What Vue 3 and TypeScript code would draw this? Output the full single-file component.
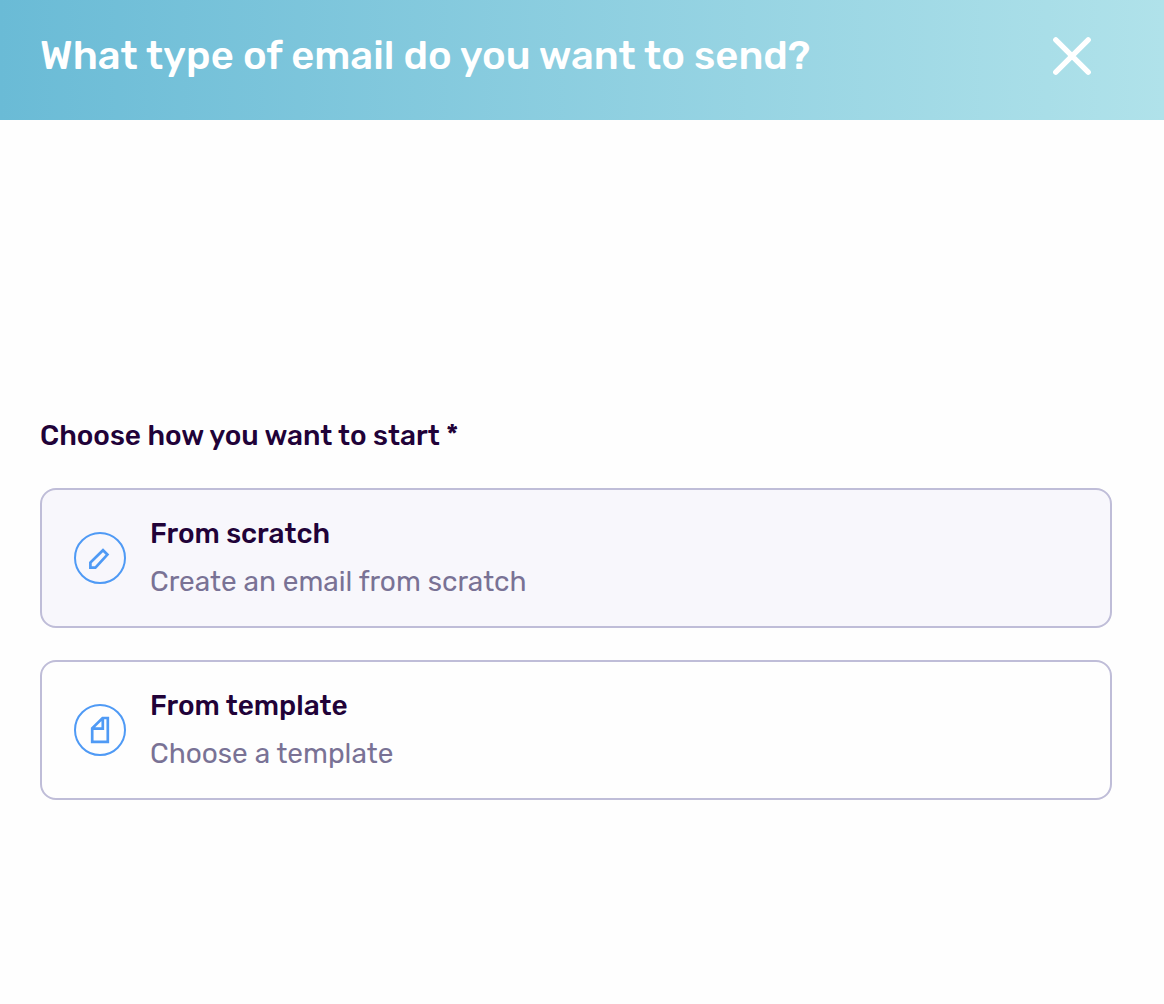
<script setup lang="ts">
import { ref } from 'vue'

type StartMode = 'scratch' | 'template'

interface StartOption {
  id: StartMode
  title: string
  description: string
}

const options: StartOption[] = [
  { id: 'scratch', title: 'From scratch', description: 'Create an email from scratch' },
  { id: 'template', title: 'From template', description: 'Choose a template' },
]

const selected = ref<StartMode>('scratch')
</script>

<template>
  <div class="dialog" role="dialog" aria-labelledby="dialog-title">
    <header class="header">
      <h1 id="dialog-title" class="title">What type of email do you want to send?</h1>
      <button class="close" type="button" aria-label="Close">
        <svg width="40" height="40" viewBox="0 0 40 40" fill="none" stroke="currentColor" stroke-width="5.4" stroke-linecap="round">
          <path d="M3.8 3.8L36.2 36.2M36.2 3.8L3.8 36.2" />
        </svg>
      </button>
    </header>

    <main class="body">
      <fieldset class="choices">
        <legend class="legend">Choose how you want to start *</legend>
        <div class="list">
          <label
            v-for="option in options"
            :key="option.id"
            class="card"
            :class="{ selected: selected === option.id }"
          >
            <input v-model="selected" class="radio" type="radio" name="start" :value="option.id" />
            <span class="icon">
              <svg width="48" height="48" viewBox="0 0 48 48" fill="none" stroke="currentColor" stroke-width="2.7" aria-hidden="true">
                <path v-if="option.id === 'scratch'" d="M14.4 33.6V28.6L27 16.2L31.4 20.6L19.4 33.6Z" />
                <path v-else d="M16.2 35.8V22.2L26.6 12H31.8V35.8ZM16.2 22.6H26.8V12" />
              </svg>
            </span>
            <span class="text">
              <span class="name">{{ option.title }}</span>
              <span class="description">{{ option.description }}</span>
            </span>
          </label>
        </div>
      </fieldset>
    </main>
  </div>
</template>

<style>
body {
  margin: 0;
  background: #fefefe;
}
</style>

<style scoped>
.dialog {
  font-family: Rubik, Roboto, sans-serif;
  color: #210238;
}

.header {
  display: flex;
  justify-content: space-between;
  align-items: flex-start;
  box-sizing: border-box;
  min-height: 120px;
  padding: 32px 72px 32px 40px;
  background: linear-gradient(90deg, #6abbd6, #b0e2ea);
  color: #fff;
}

.title {
  margin: 0;
  font-size: 40px;
  line-height: 48px;
  font-weight: 500;
}

.close {
  display: flex;
  margin: 0;
  padding: 4px 0;
  border: 0;
  background: none;
  color: inherit;
  cursor: pointer;
}

.body {
  padding: 296px 52px 204px 40px;
}

.choices {
  min-width: 0;
  margin: 0;
  padding: 0;
  border: 0;
}

.legend {
  padding: 0 0 32px;
  font-size: 28px;
  line-height: 40px;
  font-weight: 500;
}

.list {
  display: flex;
  flex-direction: column;
  gap: 32px;
}

.card {
  position: relative;
  display: flex;
  align-items: center;
  gap: 24px;
  padding: 20px 32px;
  border: 2px solid #bfbdd8;
  border-radius: 16px;
  cursor: pointer;
}

.card.selected {
  background: #f8f7fc;
}

.radio {
  position: absolute;
  inset: 0;
  width: 100%;
  height: 100%;
  margin: 0;
  opacity: 0;
  cursor: pointer;
}

.icon {
  display: flex;
  flex: none;
  border: 2px solid #4f9af5;
  border-radius: 50%;
  color: #4f9af5;
}

.text {
  display: flex;
  flex-direction: column;
  font-size: 28px;
  line-height: 48px;
}

.name {
  font-weight: 500;
}

.description {
  color: #797295;
}
</style>
